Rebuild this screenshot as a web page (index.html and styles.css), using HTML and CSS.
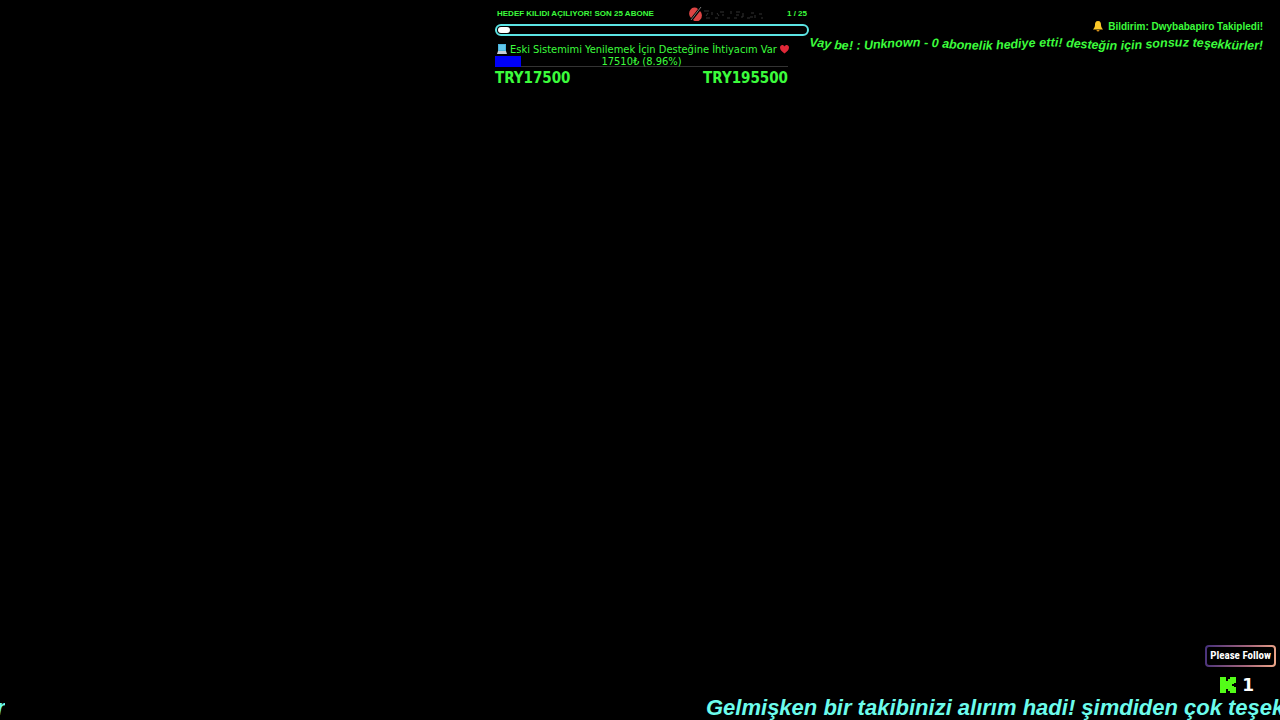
FILE: index.html
```
<!DOCTYPE html>
<html lang="tr">
<head>
    <meta charset="UTF-8">
    <meta name="viewport" content="width=device-width, initial-scale=1.0">
    <title>Stream Overlay</title>
    <link rel="stylesheet" href="styles.css">
</head>
<body>
    <header class="top">
        <section class="goals">
            <div class="sub-goal">
                <span class="sub-title">HEDEF KILIDI AÇILIYOR! SON 25 ABONE</span>
                <svg class="brand" width="76" height="14" viewBox="0 0 76 14" aria-hidden="true">
                    <path d="M9 2A5 5.500 0 0 0 2 11z" fill="#dc4444"/>
                    <path d="M11 4A5 5.500 0 0 1 4 13z" fill="#dc4444"/>
                    <path d="M2 13 L12 0" stroke="#777" stroke-width="1"/>
                    <path d="M15 4h5M17 11h4M23 5v3M26 11h3M31 5h4M34 7v2M38 11h3M42 4v3M47 5h4M47 8h3M54 6v4M58 11h3M62 6h3M66 8v3M70 7h3M72 11h2M19 6l-2 3M28 6l2 3M45 11h3M52 10h2M64 10h-3" stroke="#333" stroke-width="1" fill="none"/>
                </svg>
                <span class="sub-count">1 / 25</span>
            </div>
            <div class="sub-bar"><div class="sub-fill"></div></div>
            <div class="tip-goal">
                <div class="tip-title">
                    <svg width="12" height="12" viewBox="0 0 12 12" aria-hidden="true">
                        <path d="M2 1h8v7H2z" fill="#4cb4dc"/>
                        <path d="M3 2h6v5H3z" fill="#62c8ec"/>
                        <path d="M2 8h8l1 3H1z" fill="#c4ccd4"/>
                    </svg>
                    <span>Eski Sistemimi Yenilemek İçin Desteğine İhtiyacım Var</span>
                    <svg class="heart" width="11" height="10" viewBox="0 0 11 10" aria-hidden="true">
                        <path d="M5.500 9.500C3 7.500 1 6 1 3.500C1 .5 4.500 .2 5.500 2.500C6.500 .2 10 .5 10 3.500C10 6 8 7.500 5.500 9.500z" fill="#e02838"/>
                    </svg>
                </div>
                <div class="tip-bar">
                    <div class="tip-fill"></div>
                    <span class="tip-value">17510₺ (8.96%)</span>
                </div>
                <div class="tip-range">
                    <span>TRY17500</span>
                    <span>TRY195500</span>
                </div>
            </div>
        </section>
        <section class="alerts">
            <div class="follow-alert">
                <svg width="12" height="12" viewBox="0 0 12 12" aria-hidden="true">
                    <path d="M6 1C3.500 1 3 3 3 5C3 7 2 8 1 9.500H11C10 8 9 7 9 5C9 3 8.500 1 6 1z" fill="#fcc828"/>
                    <path d="M4.500 10h3a1.500 1.500 0 0 1-3 0z" fill="#d89018"/>
                </svg>
                <span>Bildirim: Dwybabapiro Takipledi!</span>
            </div>
            <svg class="wave" width="456" height="24" viewBox="0 0 437 23">
                <path id="wave-path" fill="none" d="M0 13 C14 13 22 16 38 16 C66 16 76 13 102 13 C128 13 140 16 165 16 C190 16 204 13 230 13 C256 13 268 16 294 16 C320 16 332 13 358 13 C384 13 396 16 422 16 L460 15"/>
                <text class="wave-text"><textPath href="#wave-path">Vay be! : Unknown - 0 abonelik hediye etti! desteğin için sonsuz teşekkürler!</textPath></text>
            </svg>
        </section>
    </header>

    <footer class="bottom">
        <div class="follow">
            <div class="follow-box"><span>Please Follow</span></div>
            <div class="followers">
                <svg width="16" height="16" viewBox="0 0 16 16" aria-hidden="true">
                    <path d="M0 0h6v4h2V2h2V0h6v6h-2v1h-2v2h2v1h2v6h-6v-2H8v-2H6v4H0z" fill="#53fc18"/>
                </svg>
                <span>1</span>
            </div>
        </div>
        <div class="ticker">
            <span class="ticker-tail"><span>teşekkürler</span></span>
            <span>Gelmişken bir takibinizi alırım hadi! şimdiden çok teşekkürler</span>
        </div>
    </footer>
</body>
</html>
```
FILE: styles.css
```
* {
    margin: 0;
    padding: 0;
    box-sizing: border-box;
}

body {
    display: flex;
    flex-direction: column;
    justify-content: space-between;
    min-height: 100vh;
    overflow: hidden;
    background-color: #000;
    color: #3cfc3c;
    font-family: "Liberation Sans", Arial, sans-serif;
}

svg {
    display: block;
    flex: none;
}

.top {
    display: grid;
    grid-template-columns: 1fr 314px 1fr;
    padding: 7px 0 0 24px;
}

/* Subscriber goal */
.goals {
    grid-column: 2;
}

.sub-goal {
    display: flex;
    align-items: center;
    height: 13px;
    padding: 0 2px;
    font-size: 8px;
    font-weight: bold;
    white-space: nowrap;
}

.sub-title {
    flex: 1;
}

.brand {
    margin-right: 22px;
}

.sub-bar {
    height: 12px;
    margin-top: 4px;
    padding: 1px;
    border: 2px solid #5ce4e4;
    border-radius: 6px;
}

.sub-fill {
    width: 4%;
    min-width: 12px;
    height: 6px;
    border-radius: 3px;
    background-color: #fff;
}

/* Donation goal */
.tip-goal {
    width: 293px;
    margin-top: 6px;
    font-family: "DejaVu Sans Condensed", "DejaVu Sans", sans-serif;
}

.tip-title {
    display: flex;
    align-items: center;
    gap: 2px;
    height: 14px;
    padding-left: 1px;
    font-size: 11px;
    white-space: nowrap;
}

.heart {
    margin-left: auto;
}

.tip-bar {
    display: grid;
    height: 11px;
    border-bottom: 1px solid #333;
}

.tip-fill,
.tip-value {
    grid-area: 1 / 1;
}

.tip-fill {
    width: 9%;
    background-color: #0000f8;
}

.tip-value {
    font-size: 11px;
    line-height: 11px;
    text-align: center;
}

.tip-range {
    display: flex;
    justify-content: space-between;
    font-size: 15px;
    font-weight: bold;
    line-height: 22px;
}

/* Alerts */
.alerts {
    display: flex;
    flex-direction: column;
    align-items: flex-end;
    padding: 12px 15px 0 0;
}

.follow-alert {
    display: flex;
    align-items: center;
    gap: 4px;
    height: 14px;
    padding-right: 2px;
    font-size: 10px;
    font-weight: bold;
}

.wave {
    overflow: visible;
}

.wave-text {
    fill: #3cfc3c;
    font-size: 12px;
    font-style: italic;
    font-weight: bold;
}

/* Follow box and ticker */
.follow {
    display: flex;
    flex-direction: column;
    align-items: flex-end;
    padding-right: 4px;
    color: #fff;
}

.follow-box {
    padding: 2px;
    border-radius: 4px;
    background: linear-gradient(100deg, #45307c, #a8687c 60%, #f0a888);
}

.follow-box span {
    display: block;
    padding: 0 3px;
    border-radius: 2px;
    background-color: #000;
    font-family: "Roboto Condensed", Roboto, sans-serif;
    font-size: 11px;
    font-weight: bold;
    line-height: 18px;
}

.followers {
    display: flex;
    align-items: center;
    gap: 6px;
    height: 22px;
    margin-top: 7px;
    padding-right: 22px;
    font-family: "DejaVu Sans", sans-serif;
    font-size: 17px;
    font-weight: bold;
}

.ticker {
    display: flex;
    gap: 701px;
    overflow: hidden;
    color: #6cfcec;
    font-size: 22px;
    font-style: italic;
    font-weight: bold;
    line-height: 24px;
    white-space: nowrap;
}

.ticker-tail {
    display: flex;
    flex: none;
    justify-content: flex-end;
    width: 5px;
    overflow: hidden;
}
```
